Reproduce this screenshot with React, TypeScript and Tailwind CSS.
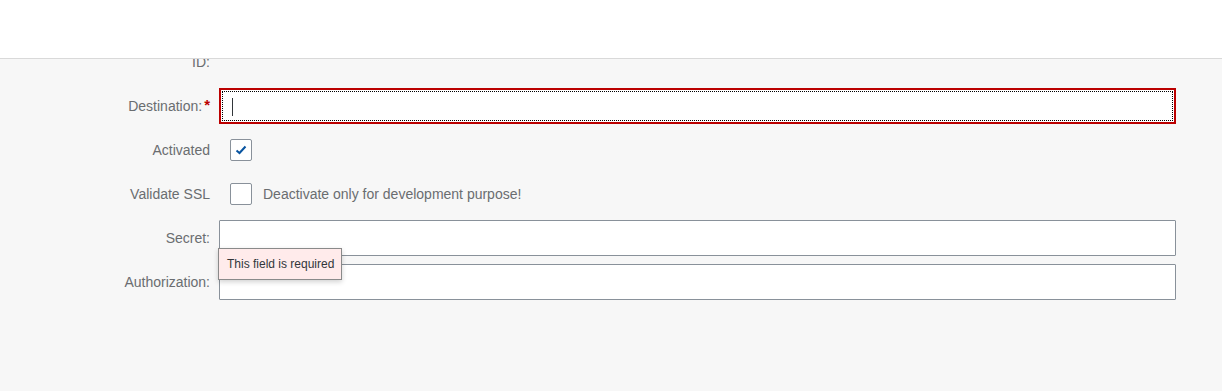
import { useState } from "react";

const font = { fontFamily: '"Liberation Sans", Arial, sans-serif' };

function Label({ children, required }: { children: React.ReactNode; required?: boolean }) {
  return (
    <div className="flex items-center justify-end h-11 text-[14px] text-[#6a6d70] whitespace-nowrap">
      {children}
      {required && <span className="text-[#bb0000] ml-[2px] text-[15px] font-bold leading-none -mt-[3px]">*</span>}
    </div>
  );
}

function Checkbox({ checked, onChange }: { checked: boolean; onChange: () => void }) {
  return (
    <button
      type="button"
      onClick={onChange}
      className="w-[22px] h-[22px] bg-white border border-[#89919a] rounded-[2px] flex items-center justify-center"
    >
      {checked && (
        <svg width="12" height="10" viewBox="0 0 12 10">
          <path d="M1.5 5.5 L4.5 8 L10.5 1.5" fill="none" stroke="#0854a0" strokeWidth="2" />
        </svg>
      )}
    </button>
  );
}

export default function App() {
  const [destination, setDestination] = useState("");
  const [activated, setActivated] = useState(true);
  const [validateSsl, setValidateSsl] = useState(false);
  const [secret, setSecret] = useState("");
  const [auth, setAuth] = useState("");

  return (
    <div className="w-[1222px] h-[391px] flex flex-col bg-[#f7f7f7]" style={font}>
      <header className="h-[59px] shrink-0 bg-white border-b border-[#d9d9d9]" />

      <main className="flex-1 overflow-hidden">
        <div className="-mt-[19px] grid grid-cols-[210px_1fr] gap-x-[9px] pr-[46px]">
          <Label>ID:</Label>
          <div className="h-11" />

          <Label required>Destination:</Label>
          <div className="h-11 flex items-center">
            <div className="w-full h-9 bg-white border-2 border-[#bb0000] p-[1px]">
              <div className="relative w-full h-full border border-dotted border-black flex items-center pl-[9px]">
                {destination === "" && (
                  <span className="absolute left-[9px] top-[6px] w-[1px] h-[18px] bg-[#32363a]" />
                )}
                <input
                  autoFocus
                  value={destination}
                  onChange={(e) => setDestination(e.target.value)}
                  className="w-full h-full outline-none bg-transparent text-[14px] text-[#32363a] caret-[#32363a]"
                />
              </div>
            </div>
          </div>

          <Label>Activated</Label>
          <div className="h-11 flex items-center pl-[11px]">
            <Checkbox checked={activated} onChange={() => setActivated(!activated)} />
          </div>

          <Label>Validate SSL</Label>
          <div className="h-11 flex items-center pl-[11px] gap-[11px]">
            <Checkbox checked={validateSsl} onChange={() => setValidateSsl(!validateSsl)} />
            <span className="text-[14px] text-[#6a6d70]">Deactivate only for development purpose!</span>
          </div>

          <Label>Secret:</Label>
          <div className="h-11 flex items-center relative">
            <input
              value={secret}
              onChange={(e) => setSecret(e.target.value)}
              className="w-full h-9 bg-white border border-[#89919a] rounded-[1px] px-3 text-[14px] outline-none"
            />
            <div className="absolute left-[-1px] top-[32px] z-10 w-[124px] h-[32px] bg-[#ffebeb] border border-[#8a8a8a] shadow-[0_2px_5px_rgba(0,0,0,0.18)] flex items-center pl-[8px] text-[12px] text-[#32363a] whitespace-nowrap">
              This field is required
            </div>
          </div>

          <Label>Authorization:</Label>
          <div className="h-11 flex items-center">
            <input
              value={auth}
              onChange={(e) => setAuth(e.target.value)}
              className="w-full h-9 bg-white border border-[#89919a] rounded-[1px] px-3 text-[14px] outline-none"
            />
          </div>
        </div>
      </main>
    </div>
  );
}
